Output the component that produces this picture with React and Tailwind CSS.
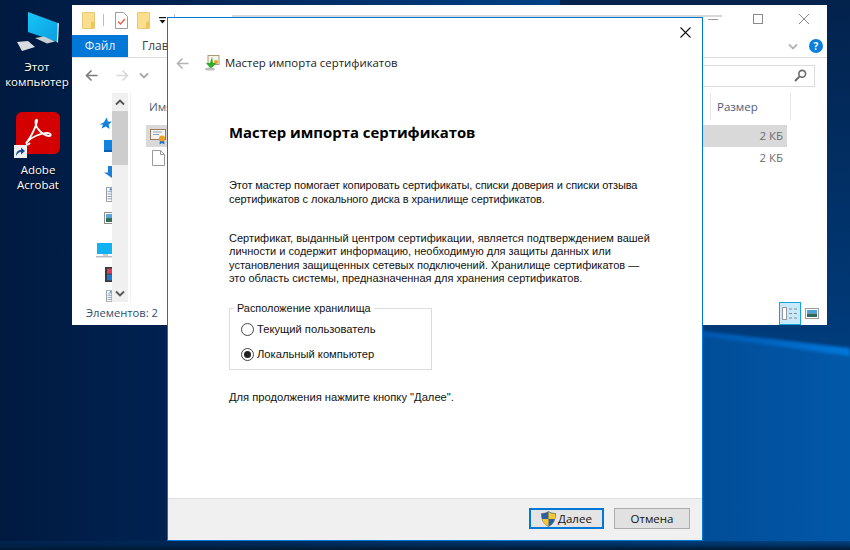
import React from "react";

function Wallpaper() {
  return (
    <svg className="absolute inset-0" width="850" height="550" viewBox="0 0 850 550">
      <defs>
        <linearGradient id="base" x1="0" y1="0" x2="1" y2="0">
          <stop offset="0" stopColor="#001a40" />
          <stop offset="0.2" stopColor="#002252" />
          <stop offset="0.8" stopColor="#004b96" />
          <stop offset="1" stopColor="#0258a8" />
        </linearGradient>
        <linearGradient id="upper" x1="0" y1="0" x2="0" y2="1">
          <stop offset="0" stopColor="#03224c" />
          <stop offset="1" stopColor="#003c7c" />
        </linearGradient>
        <linearGradient id="ray" x1="0" y1="0" x2="1" y2="0">
          <stop offset="0" stopColor="#0056ad" />
          <stop offset="1" stopColor="#0578dc" />
        </linearGradient>
        <linearGradient id="bar" x1="0" y1="0" x2="0" y2="1">
          <stop offset="0" stopColor="#012f5f" stopOpacity="0.5" />
          <stop offset="1" stopColor="#001830" />
        </linearGradient>
        <linearGradient id="scr" x1="0" y1="0" x2="1" y2="1">
          <stop offset="0" stopColor="#18c4f8" />
          <stop offset="1" stopColor="#0a9ee0" />
        </linearGradient>
        <filter id="b"><feGaussianBlur stdDeviation="1.4" /></filter>
      </defs>
      <rect width="850" height="550" fill="url(#base)" />
      <polygon points="560,0 850,0 850,352 702,333 560,322" fill="url(#upper)" />
      <polygon points="702,331 850,348 850,356 702,336" fill="url(#ray)" filter="url(#b)" />
      <rect y="541" width="850" height="9" fill="url(#bar)" />
    </svg>
  );
}

function Folder({ className }) {
  return (
    <svg className={className} width="13" height="17" viewBox="0 0 13 17">
      <path d="M0.5 0.5H12.5V16.5H0.5Z" fill="#fbdf8c" stroke="#e8c878" />
      <path d="M9 16V10L12.5 9V16Z" fill="#f1c65c" />
    </svg>
  );
}

function Chev({ up, color = "#555" }) {
  return (
    <svg width="10" height="7" viewBox="0 0 10 7">
      <path d={up ? "M1 5.5L5 1.5L9 5.5" : "M1 1.5L5 5.5L9 1.5"} fill="none" stroke={color} strokeWidth="1.8" />
    </svg>
  );
}

function Arrow({ color, left = true, size = 13 }) {
  return (
    <svg width={size} height={size} viewBox="0 0 13 13">
      <path
        d={left ? "M12.5 6.5H1.5M6.5 1.5L1.5 6.5L6.5 11.5" : "M0.5 6.5H11.5M6.5 1.5L11.5 6.5L6.5 11.5"}
        fill="none"
        stroke={color}
        strokeWidth="1.6"
      />
    </svg>
  );
}

function DocSmall({ h = 15 }) {
  return (
    <svg width="6" height={h} viewBox="0 0 6 19" preserveAspectRatio="none">
      <path d="M0.5 0.5H6V18.5H0.5Z" fill="#fff" stroke="#8c8c8c" />
      <path d="M1.5 6H6M1.5 9H6M1.5 12H6M1.5 15H6" stroke="#7a96b8" />
      <path d="M3 4L5 1L6 4Z" fill="#1a7fd4" />
    </svg>
  );
}

function NavPane() {
  return (
    <div className="relative w-[40px] overflow-hidden">
      <svg className="absolute left-[27px] top-[24px]" width="13" height="12" viewBox="0 0 16 15">
        <path d="M9.5 0.5L11 5.5L16 6L12 9.5L13 15L8.5 12L3 14.5L5 9.5H0.5L6 6.5Z" fill="#1580d8" />
      </svg>
      <div className="absolute left-[32px] top-[47px] h-[12px] w-[8px] border-b-2 border-[#0a5fae] bg-[#0f83e0]" />
      <svg className="absolute left-[32px] top-[73px]" width="8" height="12" viewBox="0 0 8 15" preserveAspectRatio="none">
        <path d="M4 0H8V15L0 8H4Z" fill="#1a80d8" />
      </svg>
      <div className="absolute left-[34px] top-[94px]"><DocSmall /></div>
      <svg className="absolute left-[32px] top-[119px]" width="8" height="12" viewBox="0 0 8 12">
        <rect x="0.5" y="0.5" width="8" height="11" fill="#fff" stroke="#8f8f8f" />
        <rect x="2" y="2" width="6" height="4" fill="#5ba6d8" />
        <rect x="2" y="6" width="6" height="4" fill="#2f6f5a" />
      </svg>
      <svg className="absolute left-[24px] top-[150px]" width="16" height="16" viewBox="0 0 16 16">
        <rect x="1" y="0" width="15" height="11" fill="#12b2f2" />
        <rect x="0" y="13" width="16" height="1.5" fill="#b8bcc0" />
        <rect x="7" y="11" width="5" height="2" fill="#c9ced3" />
      </svg>
      <svg className="absolute left-[33px] top-[174px]" width="7" height="15" viewBox="0 0 7 18" preserveAspectRatio="none">
        <rect width="7" height="18" fill="#3b3b3b" />
        <rect x="2" y="2" width="5" height="6" fill="#d8405a" />
        <rect x="2" y="9" width="5" height="7" fill="#1b78d2" />
      </svg>
      <div className="absolute left-[34px] top-[197px]"><DocSmall h={12} /></div>
    </div>
  );
}

function CertIcon() {
  return (
    <svg width="17" height="17" viewBox="0 0 17 17">
      <rect x="0.5" y="1.5" width="15" height="10" fill="#f6f4ee" stroke="#9a7a5a" />
      <path d="M3 4H12M3 6.5H9" stroke="#8aa4c8" />
      <path d="M10 11L9.5 16.5L12 15L14.5 16.5L14 11Z" fill="#1c6fd0" />
      <circle cx="12" cy="10.5" r="3" fill="#f0a020" />
    </svg>
  );
}

function Explorer() {
  return (
    <div className="absolute left-[72px] top-[5px] flex h-[320px] w-[755px] flex-col bg-white font-['Open_Sans',sans-serif] text-[11.5px]">
      <div className="relative flex h-[30px] items-center pl-[10px]">
        <Folder />
        <div className="ml-[8px] h-[12px] w-px bg-[#bdbdbd]" />
        <svg className="ml-[11px]" width="13" height="17" viewBox="0 0 13 17">
          <path d="M0.5 0.5H8.5L12.5 4.5V16.5H0.5Z" fill="#fff" stroke="#9a9a9a" />
          <path d="M3 9.5L5.5 12L10 7" fill="none" stroke="#e8603a" strokeWidth="1.4" />
        </svg>
        <Folder className="ml-[9px]" />
        <svg className="ml-[9px]" width="7" height="7" viewBox="0 0 7 7">
          <rect width="7" height="1.2" fill="#111" />
          <path d="M0.5 3H6.5L3.5 6.5Z" fill="#111" />
        </svg>
        <div className="ml-[8px] h-[12px] w-px bg-[#bdbdbd]" />
        <div className="absolute left-[160px] top-[10px] h-[2px] w-[490px] bg-[#d8d8d8]" />
        <div className="absolute right-0 top-[9px] flex items-center">
          <div className="mr-[35px] h-px w-[10px] bg-[#9a9a9a]" />
          <div className="mr-[36px] h-[10px] w-[10px] border border-[#8a8a8a]" />
          <svg className="mr-[18px]" width="10" height="10" viewBox="0 0 10 10">
            <path d="M0 0L10 10M10 0L0 10" stroke="#8a8a8a" />
          </svg>
        </div>
      </div>

      <div className="flex h-[23px] items-stretch border-b border-[#dcdcdc]">
        <div className="flex w-[56px] items-center justify-center bg-[#0078d7] text-[12px] text-[#e8f2fb]">Файл</div>
        <div className="ml-[14px] flex items-center text-[12px] text-[#3c3c3c]">Главная</div>
        <div className="ml-auto flex items-center pr-[4px]">
          <Chev color="#b5b5b5" />
          <div className="ml-[11px] flex h-[14px] w-[14px] items-center justify-center rounded-full bg-[#0b7fdc] text-[10px] font-bold leading-none text-white">?</div>
        </div>
      </div>

      <div className="flex h-[35px] items-center pl-[13px] pr-[12px]">
        <Arrow color="#7a7a7a" />
        <div className="ml-[18px]"><Arrow color="#d8d8d8" left={false} /></div>
        <div className="ml-[10px]"><Chev color="#a8a8a8" /></div>
        <div className="ml-auto flex h-[22px] w-[140px] items-center justify-end border border-[#dcdcdc] pr-[7px]">
          <svg width="13" height="13" viewBox="0 0 13 13">
            <circle cx="8.2" cy="4.8" r="3.4" fill="none" stroke="#6a6a6a" strokeWidth="1.6" />
            <path d="M5.6 7.4L1 12" stroke="#6a6a6a" strokeWidth="2" />
          </svg>
        </div>
      </div>

      <div className="flex min-h-0 flex-1">
        <NavPane />
        <div className="flex w-[16px] flex-col items-stretch bg-[#f0f0f0]">
          <div className="flex h-[18px] items-center justify-center"><Chev up /></div>
          <div className="h-[54px] bg-[#cdcdcd]" />
          <div className="flex-1" />
          <div className="flex h-[17px] items-center justify-center"><Chev /></div>
        </div>
        <div className="ml-[2px] flex min-w-0 flex-1 flex-col border-l border-[#f0f0f0]">
          <div className="flex h-[27px] items-stretch">
            <div className="flex flex-1 items-center pl-[18px] text-[#4c607a]">Имя</div>
            <div className="flex w-[81px] items-center border-x border-[#e5e5e5] pl-[6px] text-[#4c607a]">Размер</div>
            <div className="w-[36px]" />
          </div>
          <div className="ml-[15px] mr-[40px] mt-[5px] flex h-[22px] items-center justify-between bg-[#d9d9d9] pl-[4px] pr-[4px] text-[#6d6d6d]">
            <CertIcon />
            <span>2 КБ</span>
          </div>
          <div className="ml-[15px] mr-[40px] flex h-[22px] items-center justify-between pl-[6px] pr-[4px] text-[#6d6d6d]">
            <svg width="13" height="16" viewBox="0 0 13 16">
              <path d="M0.5 0.5H8.5L12.5 4.5V15.5H0.5Z" fill="#fff" stroke="#9a9a9a" />
              <path d="M8.5 0.5V4.5H12.5" fill="none" stroke="#9a9a9a" />
            </svg>
            <span>2 КБ</span>
          </div>
        </div>
      </div>

      <div className="flex h-[23px] items-center pl-[14px] text-[11.2px] text-[#2f4f70]">
        <span>Элементов: 2</span>
        <div className="ml-auto flex h-full items-stretch pr-[7px]">
          <div className="flex w-[22px] items-center justify-center border border-[#11a5d8] bg-[#c8e9fb]">
            <svg width="16" height="13" viewBox="0 0 16 13">
              <rect x="0.5" y="0.5" width="4" height="12" fill="#fff" stroke="#9a9a9a" />
              <path d="M7 2H10M12 2H15M7 6.5H10M12 6.5H15M7 11H10M12 11H15" stroke="#8a8a8a" />
            </svg>
          </div>
          <div className="ml-[3px] flex w-[16px] items-center justify-center">
            <svg width="14" height="11" viewBox="0 0 14 11">
              <rect x="0.5" y="0.5" width="13" height="10" fill="#fff" stroke="#9c9c9c" />
              <rect x="2" y="2" width="10" height="3.5" fill="#4aa3dc" />
              <rect x="2" y="5.5" width="10" height="3.5" fill="#2f6a5a" />
            </svg>
          </div>
        </div>
      </div>
    </div>
  );
}

function Radio({ checked }) {
  return (
    <span className="flex h-[13px] w-[13px] items-center justify-center rounded-full border border-[#444] bg-white">
      {checked && <span className="h-[7px] w-[7px] rounded-full bg-[#222]" />}
    </span>
  );
}

function Dialog() {
  return (
    <div className="absolute left-[167px] top-[17px] flex h-[524px] w-[536px] flex-col border border-[#0078d7] bg-white font-['Liberation_Sans',sans-serif] text-[11px] leading-[13.4px] text-[#111]">
      <div className="absolute right-[11px] top-[9px]">
        <svg width="11" height="11" viewBox="0 0 11 11">
          <path d="M0.5 0.5L10.5 10.5M10.5 0.5L0.5 10.5" stroke="#111" strokeWidth="1.1" />
        </svg>
      </div>

      <div className="mt-[38px] flex h-[14px] items-center pl-[8px] font-['Open_Sans',sans-serif] text-[11.4px]">
        <Arrow color="#b4b4b4" />
        <svg className="ml-[15px]" width="16" height="16" viewBox="0 0 16 16">
          <rect x="4" y="0.5" width="11" height="9" fill="#f6f3e8" stroke="#a89a78" />
          <circle cx="12" cy="7" r="2" fill="#f0a020" />
          <path d="M8 2L6 8H2L7 14L12 8H9Z" fill="#2cae2c" />
          <ellipse cx="6" cy="14" rx="5" ry="1.6" fill="#bdbdbd" />
        </svg>
        <span className="ml-[5px] text-[#222]">Мастер импорта сертификатов</span>
      </div>

      <div className="flex-1 pl-[61px] pt-[52px]">
        <h1 className="font-['Open_Sans',sans-serif] text-[14.9px] font-bold leading-[20px] text-black">Мастер импорта сертификатов</h1>
        <p className="mt-[36px] leading-[14px] tracking-[-0.09px]">
          Этот мастер помогает копировать сертификаты, списки доверия и списки отзыва
          <br />
          сертификатов с локального диска в хранилище сертификатов.
        </p>
        <p className="mt-[26px]">
          Сертификат, выданный центром сертификации, является подтверждением вашей
          <br />
          личности и содержит информацию, необходимую для защиты данных или
          <br />
          установления защищенных сетевых подключений. Хранилище сертификатов —
          <br />
          это область системы, предназначенная для хранения сертификатов.
        </p>
        <fieldset className="mt-[16px] h-[68px] w-[203px] border border-[#dcdcdc] pl-[11px] text-[11.2px]">
          <legend className="ml-[-7px] bg-white px-[3px] text-[10.85px] leading-[13px]">Расположение хранилища</legend>
          <div className="mt-[8px] flex items-center gap-[3px]"><Radio />Текущий пользователь</div>
          <div className="mt-[12px] flex items-center gap-[3px]"><Radio checked />Локальный компьютер</div>
        </fieldset>
        <p className="mt-[21px] text-[11.2px]">Для продолжения нажмите кнопку "Далее".</p>
      </div>

      <div className="flex h-[42px] items-start justify-end gap-[10px] border-t border-[#dfdfdf] bg-[#f0f0f0] pr-[12px] pt-[9px] font-['Open_Sans',sans-serif] text-[11.5px]">
        <button className="flex h-[21px] w-[75px] items-center justify-center gap-[2px] border-2 border-[#0078d7] bg-[#e4e4e4] text-[#111]">
          <svg width="15" height="16" viewBox="0 0 15 16">
            <path d="M7.5 0.5C9.5 2 12 2.5 14.5 2.5C14.5 8 13 13 7.5 15.5C2 13 0.5 8 0.5 2.5C3 2.5 5.5 2 7.5 0.5Z" fill="#2d5f9e" stroke="#38506e" strokeWidth="0.5" />
            <path d="M7.5 1C9.5 2.3 12 2.8 14.2 2.8L14 8H7.5ZM7.5 8H1.2C1.8 11 3.5 13.7 7.5 15.3Z" fill="#f7c62c" />
          </svg>
          Далее
        </button>
        <button className="flex h-[21px] w-[76px] items-center justify-center border border-[#adadad] bg-[#e1e1e1] text-[#111]">Отмена</button>
      </div>
    </div>
  );
}

function DesktopIcon({ className, label, children }) {
  return (
    <div className={"absolute flex w-[74px] flex-col items-center text-center font-['Open_Sans',sans-serif] text-[11.5px] leading-[15px] text-white [text-shadow:0_1px_2px_#000] " + className}>
      {children}
      <div>{label}</div>
    </div>
  );
}

export default function App() {
  return (
    <div className="relative h-[550px] w-[850px] overflow-hidden bg-[#002252]">
      <Wallpaper />
      <DesktopIcon className="left-0 top-[10px]" label={<>Этот<br />компьютер</>}>
        <svg className="mb-[8px]" width="46" height="41" viewBox="0 0 46 41">
          <path d="M14 2L44 13L43 32L14 22Z" fill="url(#scr)" />
          <path d="M43.6 12.8L45 13.4L44 33L42.8 32Z" fill="#dfe4e8" />
          <path d="M21 28L30 26.5L41 31.5L33 33.5Z" fill="#c9ced3" />
          <path d="M3 32L14 31L21 37L8 41Z" fill="#d9dde1" />
        </svg>
      </DesktopIcon>
      <DesktopIcon className="left-[1px] top-[112px]" label={<>Adobe<br />Acrobat</>}>
        <div className="relative mb-[8px] flex h-[42px] w-[44px] items-center justify-center rounded-[6px] bg-[#d40000]">
          <svg width="32" height="32" viewBox="0 0 32 32">
            <path
              d="M4 26C8 22 14 10 15 4C15.5 2 13 2 13.5 6C14 11 20 18 27 19C30 19 29 16 25 16C19 16 10 20 6 24C3 27 5 29 8 26"
              fill="none"
              stroke="#fff"
              strokeWidth="1.8"
            />
          </svg>
          <div className="absolute left-[-2px] top-[33px] flex h-[13px] w-[13px] items-center justify-center bg-[#eef0f2]">
            <svg width="11" height="11" viewBox="0 0 11 11">
              <path d="M1 10C1 6 3 4 6 4V1.5L10 5L6 8.5V6C4 6 2.5 7.5 1 10Z" fill="#1a4f94" />
            </svg>
          </div>
        </div>
      </DesktopIcon>
      <Explorer />
      <Dialog />
    </div>
  );
}
